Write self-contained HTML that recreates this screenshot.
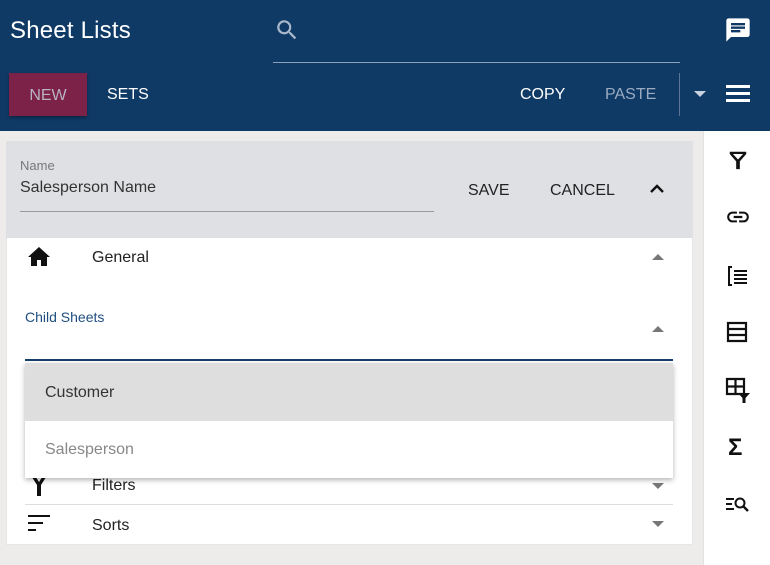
<!DOCTYPE html>
<html><head><meta charset="utf-8"><style>
*{box-sizing:border-box;margin:0;padding:0}
body{width:770px;height:565px;overflow:hidden;background:#edecea;font-family:"Liberation Sans",Arial,sans-serif;position:relative}
.a{position:absolute}
.hdr{left:0;top:0;width:770px;height:131px;background:#0f3a66}
.t{color:#fff}
</style></head><body>
<div class="a hdr"></div>
<div class="a t" style="left:10px;top:17px;font-size:24px;letter-spacing:0.2px">Sheet Lists</div>
<svg class="a" style="left:274px;top:17px" width="26" height="26" viewBox="0 0 24 24"><path fill="#a9b8cb" d="M15.5 14h-.8l-.3-.3A6.5 6.5 0 1 0 9.5 16a6.5 6.5 0 0 0 4.2-1.6l.3.3v.8l5 5 1.5-1.5-5-5zm-6 0A4.5 4.5 0 1 1 14 9.5 4.5 4.5 0 0 1 9.5 14z"/></svg>
<div class="a" style="left:273px;top:62px;width:407px;height:1px;background:#8aa0bb"></div>
<svg class="a" style="left:724px;top:16px" width="28" height="28" viewBox="0 0 24 24"><path fill="#fff" d="M20 2H4a2 2 0 0 0-2 2v18l4-4h14a2 2 0 0 0 2-2V4a2 2 0 0 0-2-2zM6 9h12v2H6zm8 5H6v-2h8zm4-6H6V6h12z"/></svg>
<div class="a" style="left:9px;top:73px;width:78px;height:43px;background:#7c2148;box-shadow:0 2px 3px rgba(0,0,0,.35);color:#b7b3c2;font-size:16px;text-align:center;line-height:43px;padding-top:1px">NEW</div>
<div class="a t" style="left:107px;top:86px;font-size:16px">SETS</div>
<div class="a t" style="left:520px;top:86px;font-size:16px">COPY</div>
<div class="a" style="left:605px;top:86px;font-size:16px;color:#9aabc2">PASTE</div>
<div class="a" style="left:679px;top:73px;width:1px;height:43px;background:#5a7596"></div>
<div class="a" style="left:694px;top:91px;width:0;height:0;border-left:6px solid transparent;border-right:6px solid transparent;border-top:6px solid #c8d2de"></div>
<div class="a" style="left:726px;top:85px;width:24px;height:3px;background:#fff;box-shadow:0 7px 0 #fff,0 14px 0 #fff"></div>

<div class="a" style="left:703px;top:131px;width:67px;height:434px;background:#fff;border-left:1px solid #e2e2e2"></div>
<svg class="a" style="left:727px;top:149px" width="22" height="22" viewBox="0 0 24 24"><path d="M3 3h18v2.5l-7 8V22h-4v-8.5l-7-8z M6.5 5.5l5.5 6 5.5-6z" fill="#111" fill-rule="evenodd"/></svg>
<svg class="a" style="left:725px;top:204px" width="26" height="26" viewBox="0 0 24 24"><path fill="#111" d="M3.9 12c0-1.7 1.4-3.1 3.1-3.1h4V7H7a5 5 0 0 0 0 10h4v-1.9H7c-1.7 0-3.1-1.4-3.1-3.1zM8 13h8v-2H8zm9-6h-4v1.9h4c1.7 0 3.1 1.4 3.1 3.1s-1.4 3.1-3.1 3.1h-4V17h4a5 5 0 0 0 0-10z"/></svg>
<svg class="a" style="left:726px;top:264px" width="24" height="24" viewBox="0 0 24 24"><path fill="#111" d="M2 2h4v2H4v16h2v2H2zM8 6h13v2H8zm0 4h13v2H8zm0 4h13v2H8zm0 4h13v2H8z"/></svg>
<svg class="a" style="left:725px;top:320px" width="24" height="24" viewBox="0 0 24 24"><path fill="none" stroke="#111" stroke-width="2.2" d="M3 3h18v18H3zM3 9h18M3 15h18"/></svg>
<svg class="a" style="left:725px;top:376px" width="26" height="28" viewBox="0 0 26 28"><path fill="none" stroke="#111" stroke-width="2.2" d="M2 3h17v15H2zM2 10.5h17M10.5 3v15"/><path fill="#111" d="M13 17h12l-4.5 5v5h-3v-5z"/></svg>
<div class="a" style="left:728px;top:434px;font-size:24px;font-weight:bold;color:#111">Σ</div>
<svg class="a" style="left:725px;top:494px" width="26" height="22" viewBox="0 0 26 22"><path fill="#111" d="M1 4h8v2H1zm0 5h6v2H1zm0 5h8v2H1z"/><circle cx="15" cy="9" r="4.5" fill="none" stroke="#111" stroke-width="2"/><path stroke="#111" stroke-width="2.4" d="M18 12l5 5"/></svg>

<div class="a" style="left:6px;top:141px;width:687px;height:404px;background:#fff;border:1px solid #e6e6e6"></div>
<div class="a" style="left:6px;top:141px;width:687px;height:97px;background:#dfe0e3"></div>
<div class="a" style="left:20px;top:158px;font-size:13px;color:#777">Name</div>
<div class="a" style="left:20px;top:179px;font-size:16px;color:#333">Salesperson Name</div>
<div class="a" style="left:20px;top:211px;width:414px;height:1px;background:#999"></div>
<div class="a" style="left:468px;top:182px;font-size:16px;color:#222">SAVE</div>
<div class="a" style="left:550px;top:182px;font-size:16px;color:#222">CANCEL</div>
<svg class="a" style="left:649px;top:182px" width="16" height="14" viewBox="0 0 16 14"><path d="M2 10l6-6 6 6" fill="none" stroke="#111" stroke-width="2.4"/></svg>

<svg class="a" style="left:27px;top:245px" width="24" height="22" viewBox="0 0 24 22"><path fill="#111" d="M12 2L1 12h3v9h6v-6h4v6h6v-9h3z"/></svg>
<div class="a" style="left:92px;top:249px;font-size:16px;color:#222">General</div>
<div class="a" style="left:652px;top:254px;border-left:6px solid transparent;border-right:6px solid transparent;border-bottom:6px solid #777"></div>
<div class="a" style="left:25px;top:309px;font-size:14px;color:#1e4e80">Child Sheets</div>
<div class="a" style="left:652px;top:326px;border-left:6px solid transparent;border-right:6px solid transparent;border-bottom:6px solid #777"></div>
<div class="a" style="left:25px;top:359px;width:648px;height:2px;background:#163f6b"></div>

<svg class="a" style="left:30px;top:474px" width="18" height="22" viewBox="0 0 18 22"><path fill="#111" d="M0 0h4l5 8 5-8h4l-7 11v11h-4V11z"/></svg>
<div class="a" style="left:92px;top:477px;font-size:16px;color:#222">Filters</div>
<div class="a" style="left:652px;top:483px;border-left:6px solid transparent;border-right:6px solid transparent;border-top:6px solid #777"></div>
<div class="a" style="left:25px;top:504px;width:648px;height:1px;background:#ddd"></div>
<div class="a" style="left:28px;top:515px;width:22px;height:2px;background:#111"></div>
<div class="a" style="left:28px;top:522px;width:15px;height:2px;background:#111"></div>
<div class="a" style="left:28px;top:529px;width:8px;height:2px;background:#111"></div>
<div class="a" style="left:92px;top:517px;font-size:16px;color:#222">Sorts</div>
<div class="a" style="left:652px;top:521px;border-left:6px solid transparent;border-right:6px solid transparent;border-top:6px solid #777"></div>

<div class="a" style="left:25px;top:363px;width:648px;height:115px;background:#fff;box-shadow:0 2px 5px rgba(0,0,0,.3)"></div>
<div class="a" style="left:25px;top:363px;width:648px;height:58px;background:#dedede"></div>
<div class="a" style="left:45px;top:384px;font-size:16px;color:#333">Customer</div>
<div class="a" style="left:45px;top:441px;font-size:16px;color:#888">Salesperson</div>
</body></html>
